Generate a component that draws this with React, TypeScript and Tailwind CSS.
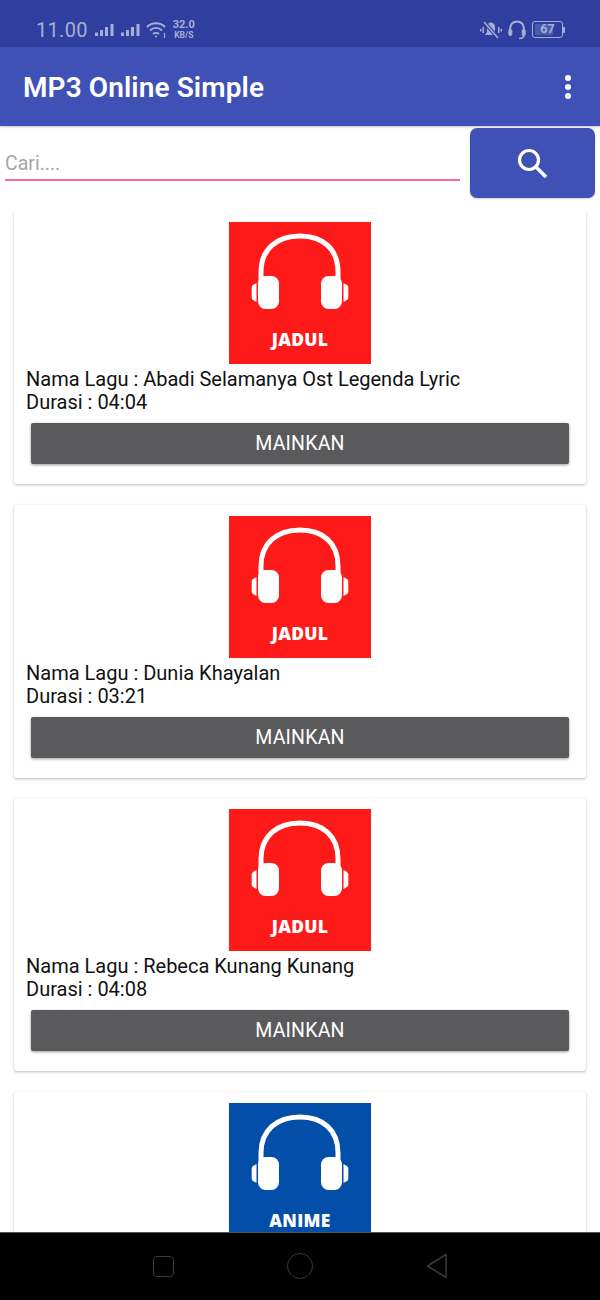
const songs = [
  { title: "Abadi Selamanya Ost Legenda Lyric", duration: "04:04", tag: "JADUL", tile: "bg-[#ff1a1a]" },
  { title: "Dunia Khayalan", duration: "03:21", tag: "JADUL", tile: "bg-[#ff1a1a]" },
  { title: "Rebeca Kunang Kunang", duration: "04:08", tag: "JADUL", tile: "bg-[#ff1a1a]" },
  { title: "", duration: "", tag: "ANIME", tile: "bg-[#034ea9]" },
];

function Headphones() {
  return (
    <svg width="142" height="92" viewBox="0 0 142 92" fill="white" className="shrink-0">
      <path d="M32 60 V50 C32 27 48 14 71 14 C94 14 109 27 109 50 V60" fill="none" stroke="white" strokeWidth="5" />
      <rect x="29" y="54" width="21" height="33" rx="7.5" />
      <rect x="92" y="54" width="21" height="33" rx="7.5" />
      <path d="M27.5 61 L27.5 80 L24 78 Q22.7 77 22.7 75.5 L22.7 65.5 Q22.7 64 24 63 Z" />
      <path d="M114.5 61 L114.5 80 L118 78 Q119.3 77 119.3 75.5 L119.3 65.5 Q119.3 64 118 63 Z" />
    </svg>
  );
}

function SongCard({ song }: { song: (typeof songs)[number] }) {
  return (
    <div className="shrink-0 h-[273px] mx-[14px] mb-[20.5px] bg-white rounded-[3px] shadow-[0_1px_3px_rgba(0,0,0,0.28)] pt-[11px] flex flex-col">
      <div className={"w-[142px] h-[142px] mx-auto flex flex-col items-center shrink-0 " + song.tile}>
        <Headphones />
        <div className="font-['Open_Sans',sans-serif] font-extrabold text-[17.5px] leading-[24px] mt-[13px] text-white tracking-[0.3px]">{song.tag}</div>
      </div>
      {song.title && (
        <>
          <div className="px-3 pt-[4px] text-[20px] leading-[23px] text-[#111111]">
            <div>Nama Lagu : {song.title}</div>
            <div>Durasi : {song.duration}</div>
          </div>
          <div className="mx-[17px] mt-[9px] h-[41px] pt-[1px] bg-[#5a5a5c] rounded-[2px] shadow-[0_1px_3px_rgba(0,0,0,0.4)] flex items-center justify-center text-white text-[19.5px] tracking-[0.2px]">
            MAINKAN
          </div>
        </>
      )}
    </div>
  );
}

function SignalBars() {
  return (
    <svg width="21" height="14" viewBox="0 0 21 14" fill="#a7aed6">
      <rect x="0" y="9.5" width="3" height="3.5" />
      <rect x="5" y="7" width="3" height="6" />
      <rect x="10" y="4" width="3" height="9" />
      <rect x="15.5" y="1" width="3" height="12" />
    </svg>
  );
}

export default function App() {
  return (
    <div className="w-[600px] h-[1300px] flex flex-col overflow-hidden bg-white font-['Roboto',sans-serif]">
      {/* status bar */}
      <div className="h-[47px] shrink-0 bg-[#303f9f] flex items-center text-[#a7aed6] pt-[12px] pl-9 pr-[35px]">
        <span className="text-[20px] tracking-[0.3px] mr-[7px]">11.00</span>
        <div className="flex gap-[5px] mr-[4px]">
          <SignalBars />
          <SignalBars />
        </div>
        <svg width="22" height="18" viewBox="0 0 22 18" fill="none" stroke="#a7aed6" strokeWidth="1.8" className="mr-[5px]">
          <path d="M1 6 C6 1 14 1 19 6" />
          <path d="M4 9.5 C7.5 6 12.5 6 16 9.5" />
          <path d="M7 13 C8.5 11.5 11.5 11.5 13 13" />
          <circle cx="10" cy="15.5" r="1" fill="#a7aed6" stroke="none" />
          <path d="M18.5 12 V17" strokeWidth="1.2" />
        </svg>
        <div className="flex flex-col items-center font-bold leading-[10px]">
          <span className="text-[11px]">32.0</span>
          <span className="text-[8.5px]">KB/S</span>
        </div>
        <div className="ml-auto flex items-center gap-[6px]">
          <svg width="22" height="18" viewBox="0 0 22 18" fill="#a7aed6">
            <path d="M7 6 C7 3 9 1.5 11 1.5 C13 1.5 15 3 15 6 V11 L17 14 H5 L7 11 Z" />
            <rect x="2.5" y="6" width="1.5" height="6" />
            <rect x="0" y="8" width="1.5" height="2.5" />
            <rect x="18" y="6" width="1.5" height="6" />
            <rect x="20.5" y="8" width="1.5" height="2.5" />
            <path d="M4 1 L18 17" stroke="#303f9f" strokeWidth="3.5" />
            <path d="M4 1 L18 17" stroke="#a7aed6" strokeWidth="1.5" />
          </svg>
          <svg width="18" height="20" viewBox="0 0 18 20" fill="none" stroke="#a7aed6" strokeWidth="2">
            <path d="M2 11 V9 C2 4.5 5 1.5 9 1.5 C13 1.5 16 4.5 16 9 V11" />
            <rect x="0.8" y="9.5" width="3" height="6" rx="1.2" fill="#a7aed6" strokeWidth="1" />
            <rect x="14.2" y="9.5" width="3" height="6" rx="1.2" fill="#a7aed6" strokeWidth="1" />
            <path d="M16 15 C16 18 14 18.5 11 18.5" strokeWidth="1.6" />
          </svg>
          <div className="flex items-center">
            <div className="w-[31px] h-[17px] border border-[#a7aed6] rounded-[3px] relative flex items-center justify-center p-[2px]">
              <div className="absolute left-[2px] top-[2px] bottom-[2px] w-[18px] bg-[#4c5bae] rounded-[1px]" />
              <span className="relative text-[12.5px] font-bold leading-none">67</span>
            </div>
            <div className="w-[2px] h-[6px] bg-[#a7aed6] rounded-r-[1px]" />
          </div>
        </div>
      </div>

      {/* app bar */}
      <div className="h-[79px] shrink-0 bg-[#3f51b5] flex items-center justify-between pl-[23px] pr-[29px] shadow-[0_1px_2px_rgba(0,0,0,0.25)] relative">
        <span className="text-white text-[28px] font-semibold tracking-[0.1px] pt-[2px]">MP3 Online Simple</span>
        <div className="flex flex-col gap-[3px]">
          <div className="w-[6px] h-[6px] rounded-full bg-white" />
          <div className="w-[6px] h-[6px] rounded-full bg-white" />
          <div className="w-[6px] h-[6px] rounded-full bg-white" />
        </div>
      </div>

      {/* search row */}
      <div className="h-[85px] shrink-0 flex items-start pt-[2px] px-[5px]">
        <div className="w-[455px] h-[53px] flex flex-col justify-end">
          <span className="text-[#a6a6a6] text-[19.5px] leading-[24px] mb-[3px]">Cari....</span>
          <div className="h-[2px] bg-[#ff6a9c]" />
        </div>
        <div className="ml-[10px] w-[125px] h-[70px] bg-[#3f51b5] rounded-[7px] flex items-center justify-center shadow-[0_1px_2px_rgba(0,0,0,0.2)]">
          <svg width="32" height="32" viewBox="0 0 32 32" fill="none" stroke="white" strokeWidth="3.2" className="-ml-[2px]">
            <circle cx="13" cy="13" r="9.5" />
            <path d="M20 20 L30 30" strokeWidth="3.6" />
          </svg>
        </div>
      </div>

      {/* song list */}
      <div className="flex-1 min-h-0 overflow-hidden flex flex-col">
        {songs.map((song, i) => (
          <SongCard key={i} song={song} />
        ))}
      </div>

      {/* nav bar */}
      <div className="h-[68px] shrink-0 bg-black border-t border-[#555] flex items-center justify-between pl-[153px] pr-[152px]">
        <div className="w-[21px] h-[21px] border-[1.5px] border-[#3a3a3a] rounded-[4px] -mt-[1px]" />
        <div className="w-[26px] h-[26px] border-[1.5px] border-[#3a3a3a] rounded-full -mt-[1px]" />
        <svg width="22" height="26" viewBox="0 0 22 26" fill="none" stroke="#3a3a3a" strokeWidth="1.5" strokeLinejoin="round" className="-mt-[1px]">
          <path d="M1.5 13 L20 1.5 V24.5 Z" />
        </svg>
      </div>
    </div>
  );
}
